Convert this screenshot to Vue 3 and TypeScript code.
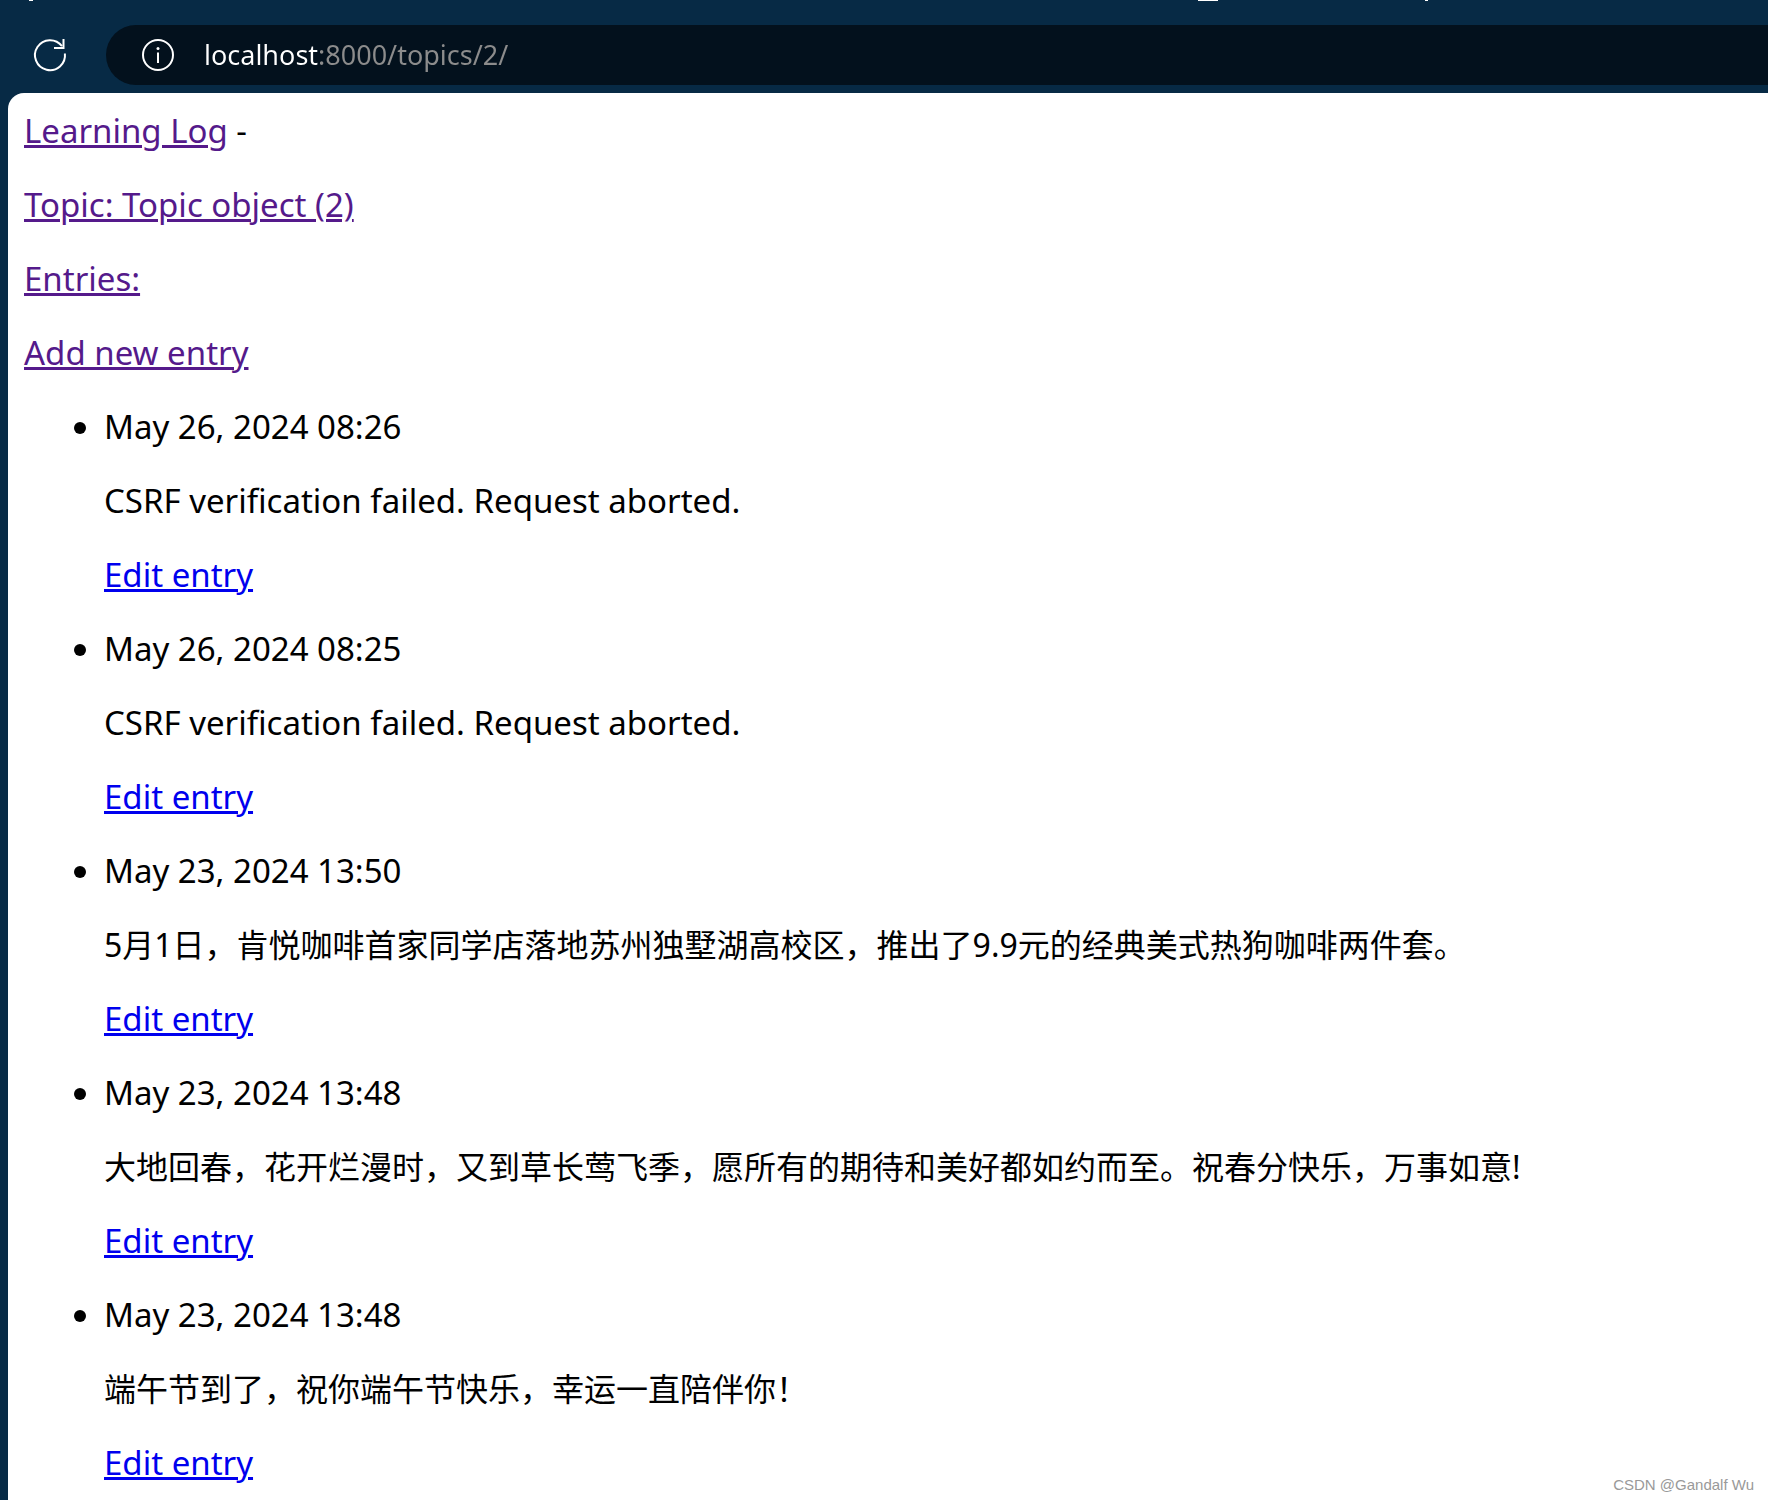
<script setup lang="ts">
import { ref } from 'vue'

interface Entry {
  id: number
  date: string
  text: string
  lang: 'en' | 'zh'
}

const address = ref('localhost:8000/topics/2/')

const entries: Entry[] = [
  { id: 5, date: 'May 26, 2024 08:26', text: 'CSRF verification failed. Request aborted.', lang: 'en' },
  { id: 4, date: 'May 26, 2024 08:25', text: 'CSRF verification failed. Request aborted.', lang: 'en' },
  { id: 3, date: 'May 23, 2024 13:50', text: '5月1日，肯悦咖啡首家同学店落地苏州独墅湖高校区，推出了9.9元的经典美式热狗咖啡两件套。', lang: 'zh' },
  { id: 2, date: 'May 23, 2024 13:48', text: '大地回春，花开烂漫时，又到草长莺飞季，愿所有的期待和美好都如约而至。祝春分快乐，万事如意!', lang: 'zh' },
  { id: 1, date: 'May 23, 2024 13:48', text: '端午节到了，祝你端午节快乐，幸运一直陪伴你！', lang: 'zh' },
]
</script>

<template>
  <div class="browser">
    <header class="toolbar">
      <span class="tab-edge tab-edge-left"></span>
      <span class="tab-edge tab-edge-icon"></span>
      <span class="tab-edge tab-edge-title"></span>
      <button class="icon-button" type="button" aria-label="Refresh">
        <svg width="36" height="36" viewBox="0 0 36 36" fill="none" stroke="#fff" stroke-width="2">
          <path d="M32.9 16.5A15 15 0 1 1 30 9.2" />
          <path d="M31.5 2v9H22" />
        </svg>
      </button>
      <div class="address">
        <button class="icon-button" type="button" aria-label="Site information">
          <svg width="36" height="36" viewBox="0 0 36 36" fill="none" stroke="#fff" stroke-width="2">
            <circle cx="18" cy="18" r="15" />
            <path d="M18 15.5V26" />
            <circle cx="18" cy="11.5" r="1.5" fill="#fff" stroke="none" />
          </svg>
        </button>
        <input v-model="address" class="url" type="text" aria-label="Address" spellcheck="false" />
      </div>
    </header>

    <main class="page">
      <p><a class="visited" href="#home">Learning Log</a> -</p>
      <p><a class="visited" href="#topic">Topic: Topic object (2)</a></p>
      <p><a class="visited" href="#entries">Entries:</a></p>
      <p><a class="visited" href="#new">Add new entry</a></p>
      <ul>
        <li v-for="entry in entries" :key="entry.id">
          <p>{{ entry.date }}</p>
          <p :class="`text-${entry.lang}`">{{ entry.text }}</p>
          <p><a :href="`#edit-${entry.id}`">Edit entry</a></p>
        </li>
      </ul>
    </main>
    <span class="watermark">CSDN @Gandalf Wu</span>
  </div>
</template>

<style>
body {
  margin: 0;
  background: #072a45;
}
</style>

<style scoped>
.browser {
  position: relative;
  display: flex;
  flex-direction: column;
  height: 100vh;
  overflow: hidden;
  background: #072a45;
  font-family: "Noto Sans", "Noto Sans CJK SC", sans-serif;
}

.toolbar {
  position: relative;
  display: flex;
  flex: none;
  align-items: center;
  gap: 38px;
  padding: 25px 0 8px 32px;
}

/* Lower edges of the tab strip, cut off by the top of the window */
.tab-edge {
  position: absolute;
  top: 0;
  height: 1px;
  background: #fff;
}

.tab-edge-left {
  left: 29px;
  width: 4px;
}

.tab-edge-icon {
  left: 1198px;
  width: 20px;
}

.tab-edge-title {
  left: 1425px;
  width: 3px;
}

.icon-button {
  display: flex;
  flex: none;
  padding: 0;
  border: 0;
  background: none;
}

.address {
  display: flex;
  flex: 1;
  align-items: center;
  gap: 28px;
  height: 60px;
  padding-left: 34px;
  border-radius: 30px 0 0 30px;
  background: #03111d;
}

/* The host name is white, the rest of the address is grey */
.url {
  box-sizing: border-box;
  flex: 1;
  min-width: 0;
  height: 42px;
  padding: 0 0 2px;
  border: 0;
  outline: 0;
  background: linear-gradient(90deg, #fff 114px, #8c8c8c 114px);
  background-clip: text;
  color: transparent;
  font-family: inherit;
  font-size: 27px;
  line-height: 40px;
}

.page {
  flex: 1;
  min-height: 0;
  margin-left: 8px;
  padding: 17px 16px;
  overflow: hidden;
  border-top-left-radius: 16px;
  background: #fff;
  color: #000;
  font-size: 33px;
  line-height: 42px;
}

.page p {
  margin: 0 0 32px;
}

.page .text-zh {
  font-size: 32px;
}

.page ul {
  margin: 0;
  padding-left: 80px;
}

.page a {
  color: #0000ee;
  text-decoration-thickness: 3px;
}

.page a.visited {
  color: #551a8b;
}

.watermark {
  position: absolute;
  right: 14px;
  bottom: 5px;
  color: #999;
  font-family: "Liberation Sans", sans-serif;
  font-size: 15px;
  line-height: 20px;
}
</style>
